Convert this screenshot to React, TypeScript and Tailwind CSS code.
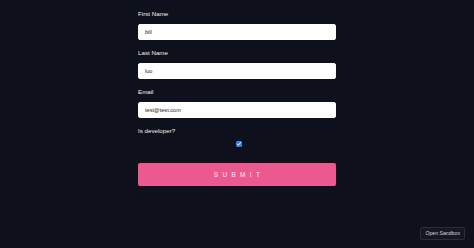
import React from "react";

const font = { fontFamily: '"Liberation Sans", Arial, sans-serif' };

function Field({ label, value }: { label: string; value: string }) {
  return (
    <div className="flex flex-col">
      <label className="block h-[11px] leading-[11px] text-[6.2px] text-[#f0f0f0] mb-[5px]">{label}</label>
      <input
        readOnly
        value={value}
        className="block w-full h-[16px] box-border rounded-[2px] border border-white bg-white px-[6px] text-[5.6px] text-[#222] outline-none"
        style={font}
      />
    </div>
  );
}

export default function App() {
  return (
    <div className="relative w-[474px] h-[248px] bg-[#0e101c] overflow-hidden" style={font}>
      <form className="w-[198px] mx-auto pt-[8px] flex flex-col gap-[7px]" onSubmit={(e) => e.preventDefault()}>
        <Field label="First Name" value="bill" />
        <Field label="Last Name" value="luo" />
        <Field label="Email" value="test@test.com" />
        <div className="flex flex-col">
          <label className="block h-[11px] leading-[11px] text-[6.2px] text-[#f0f0f0]">Is developer?</label>
          <div className="flex justify-center mt-[5px] pl-[4px]">
            <input type="checkbox" checked readOnly className="block w-[6px] h-[6px] m-0 accent-[#2f7cf6]" />
          </div>
        </div>
        <button
          type="submit"
          className="mt-[9px] h-[23px] w-full rounded-[2px] bg-[#ec5990] text-[6.4px] font-thin uppercase tracking-[4.4px] text-white/90 pl-[4px]"
          style={font}
        >
          Submit
        </button>
      </form>
      <div className="absolute right-[9px] bottom-[8px] h-[13px] px-[4px] flex items-center rounded-[2px] border border-[#2a2d38] bg-[#141621] text-[5.2px] text-[#d6d6d6]">
        Open Sandbox
      </div>
    </div>
  );
}
